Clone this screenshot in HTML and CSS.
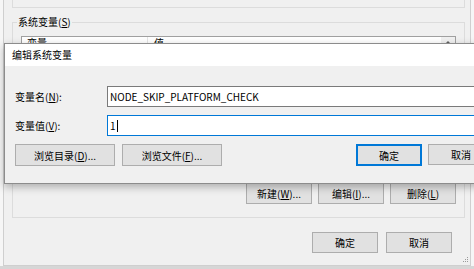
FILE: index.html
```html
<!DOCTYPE html>
<html lang="zh-CN">
<head>
    <meta charset="UTF-8">
    <title>编辑系统变量</title>
    <link rel="stylesheet" href="styles.css">
</head>
<body>
    <div class="screen">
        <div class="window">
            <div class="user-group"></div>

            <div class="sys-group">
                <span class="group-label">系统变量(<u>S</u>)</span>
                <div class="list">
                    <div class="list-head">
                        <span class="col-name">变量</span>
                        <span class="col-value">值</span>
                        <span class="scroll-up"></span>
                    </div>
                </div>
                <div class="list-actions">
                    <button class="btn btn-small">新建(<u>W</u>)...</button>
                    <button class="btn btn-small">编辑(<u>I</u>)...</button>
                    <button class="btn btn-small">删除(<u>L</u>)</button>
                </div>
            </div>

            <div class="window-actions">
                <button class="btn btn-small">确定</button>
                <button class="btn btn-small">取消</button>
            </div>

            <svg class="grip" width="7" height="7" viewBox="0 0 7 7">
                <rect x="5" y="0" width="1" height="1" fill="#9a9a9a"/>
                <rect x="3" y="2" width="1" height="1" fill="#9a9a9a"/>
                <rect x="5" y="2" width="1" height="1" fill="#9a9a9a"/>
                <rect x="1" y="4" width="1" height="1" fill="#9a9a9a"/>
                <rect x="3" y="4" width="1" height="1" fill="#9a9a9a"/>
                <rect x="5" y="4" width="1" height="1" fill="#9a9a9a"/>
            </svg>
        </div>
        <div class="below"></div>

        <!-- edit dialog over the environment variables window -->
        <div class="dialog">
            <div class="dialog-title">编辑系统变量</div>
            <div class="dialog-body">
                <div class="field-row">
                    <label class="field-label">变量名(<u>N</u>):</label>
                    <div class="textbox">NODE_SKIP_PLATFORM_CHECK</div>
                </div>
                <div class="field-row">
                    <label class="field-label">变量值(<u>V</u>):</label>
                    <div class="textbox focused">1<span class="caret"></span></div>
                </div>
                <div class="dialog-actions">
                    <button class="btn btn-browse">浏览目录(<u>D</u>)...</button>
                    <button class="btn btn-browse">浏览文件(<u>F</u>)...</button>
                    <span class="spacer"></span>
                    <button class="btn btn-small btn-default">确定</button>
                    <button class="btn btn-small">取消</button>
                </div>
            </div>
        </div>
    </div>
</body>
</html>
```

FILE: styles.css
```css
* {
    box-sizing: border-box;
}
body {
    margin: 0;
    font-family: "Noto Sans CJK SC", "Noto Sans", sans-serif;
    font-size: 10px;
    color: #000;
    background: #f6f6f6;
}
u {
    text-decoration: underline;
    text-underline-offset: 1px;
}
.screen {
    position: relative;
    width: 474px;
    height: 269px;
    overflow: hidden;
    background: #f6f6f6;
}
.window {
    position: relative;
    margin-left: 3px;
    width: 468px;
    height: 266px;
    border: 1px solid #cfcfcf;
    border-top: none;
    background: #f0f0f0;
}
.below {
    height: 3px;
    background: #d6d6d6;
}
.user-group {
    height: 8px;
    margin: 0 5px 0 8px;
    border: 1px solid #dcdcdc;
    border-top: none;
}
.sys-group {
    position: relative;
    height: 196px;
    margin: 14px 5px 0 8px;
    padding: 13px 8px 0 8px;
    border: 1px solid #dcdcdc;
}
.group-label {
    position: absolute;
    left: 4px;
    top: -8px;
    padding: 0 1px;
    line-height: 14px;
    background: #f0f0f0;
}
.list {
    height: 139px;
    border: 1px solid #a0a0a0;
    background: #fff;
}
.list-head {
    display: flex;
    height: 24px;
    line-height: 12px;
    border-bottom: 1px solid #e5e5e5;
}
.col-name {
    width: 126px;
    padding-left: 5px;
    border-right: 1px solid #e5e5e5;
}
.col-value {
    flex: 1;
    padding-left: 6px;
}
.scroll-up {
    position: relative;
    width: 14px;
    background: #f0f0f0;
}
.scroll-up::after {
    content: "";
    position: absolute;
    left: 5px;
    top: 4px;
    border-left: 2px solid transparent;
    border-right: 2px solid transparent;
    border-bottom: 2px solid #606060;
}
.list-actions {
    display: flex;
    justify-content: flex-end;
    gap: 6px;
    margin-top: 8px;
}
.window-actions {
    display: flex;
    justify-content: flex-end;
    gap: 8px;
    margin: 14px 18px 0 0;
}
.btn {
    height: 21px;
    padding: 0;
    font-family: inherit;
    font-size: 10px;
    color: #000;
    background: #e1e1e1;
    border: 1px solid #adadad;
}
.btn-small {
    width: 66px;
}
.btn-browse {
    width: 100px;
    height: 22px;
}
.btn-default {
    height: 22px;
    border-color: #0078d7;
    box-shadow: inset 0 0 0 1px #0078d7;
}
.grip {
    position: absolute;
    right: 1px;
    bottom: 1px;
}
.dialog {
    position: absolute;
    left: 4px;
    top: 43px;
    width: 501px;
    height: 141px;
    background: #f0f0f0;
    border: 1px solid #8c8c8c;
    box-shadow: 0 3px 8px rgba(0, 0, 0, 0.28);
}
.dialog-title {
    height: 22px;
    padding-left: 7px;
    line-height: 22px;
    background: #fff;
}
.dialog-body {
    padding: 20px 10px 0 10px;
}
.field-row {
    display: flex;
    align-items: center;
    height: 21px;
    margin-bottom: 8px;
}
.field-label {
    width: 92px;
}
.textbox {
    flex: 1;
    height: 21px;
    padding: 0 2px;
    line-height: 19px;
    background: #fff;
    border: 1px solid #7a7a7a;
}
.textbox.focused {
    border-color: #0078d7;
}
.caret {
    display: inline-block;
    width: 1px;
    height: 12px;
    margin-left: 1px;
    vertical-align: -2px;
    background: #000;
}
.dialog-actions {
    display: flex;
    gap: 7px;
    margin-top: 5px;
}
.spacer {
    flex: 1;
}
.dialog-actions .btn-default {
    margin-right: -1px;
}
```
